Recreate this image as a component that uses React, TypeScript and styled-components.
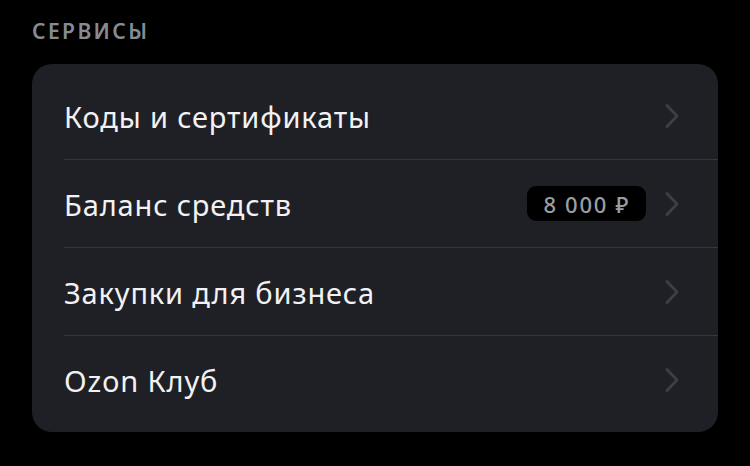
import React from "react";
import styled, { createGlobalStyle } from "styled-components";

const GlobalStyle = createGlobalStyle`
  html, body {
    margin: 0;
    padding: 0;
    background: #000;
  }
  body {
    font-family: "Noto Sans", "Open Sans", sans-serif;
    -webkit-font-smoothing: antialiased;
  }
`;

type Item = {
  title: string;
  badge?: string;
};

const items: Item[] = [
  { title: "Коды и сертификаты" },
  { title: "Баланс средств", badge: "8 000 ₽" },
  { title: "Закупки для бизнеса" },
  { title: "Ozon Клуб" },
];

const Chevron = () => (
  <svg width="16" height="26" viewBox="0 0 16 26" fill="none">
    <path
      d="M3 2.5L13 13L3 23.5"
      stroke="#3b3e45"
      strokeWidth="3"
      strokeLinecap="round"
      strokeLinejoin="round"
    />
  </svg>
);

const App = () => {
  return (
    <>
      <GlobalStyle />
      <Page>
        <Heading>Сервисы</Heading>
        <Card>
          {items.map((item, i) => (
            <Row key={item.title} last={i === items.length - 1}>
              <Title>{item.title}</Title>
              {item.badge && <Badge>{item.badge}</Badge>}
              <Chevron />
            </Row>
          ))}
        </Card>
      </Page>
    </>
  );
};

export default App;

const Page = styled.div`
  width: 750px;
  height: 466px;
  box-sizing: border-box;
  padding: 18px 32px 0 32px;
  background: #000;
`;

const Heading = styled.h2`
  margin: 0 0 20px 0;
  font-size: 21px;
  line-height: 26px;
  font-weight: 600;
  letter-spacing: 2.4px;
  text-transform: uppercase;
  color: #858b94;
`;

const Card = styled.div`
  width: 686px;
  background: #1f2025;
  border-radius: 20px;
  padding: 8px 0;
  display: flex;
  flex-direction: column;
`;

const Row = styled.div<{ last?: boolean }>`
  height: 88px;
  margin-left: 32px;
  padding-right: 38px;
  display: flex;
  align-items: center;
  gap: 16px;
  box-sizing: border-box;
  border-bottom: ${(p) => (p.last ? "none" : "1px solid #35373d")};
`;

const Title = styled.span`
  flex: 1;
  font-size: 29px;
  font-weight: 400;
  letter-spacing: 0.85px;
  color: #f2f2f4;
  padding-top: 1px;
`;

const Badge = styled.span`
  height: 35px;
  padding: 0 16px;
  display: flex;
  align-items: center;
  border-radius: 9px;
  background: #000;
  color: #989ea7;
  font-size: 22px;
  font-weight: 500;
  letter-spacing: 1.7px;
  margin-right: 2px;
`;
